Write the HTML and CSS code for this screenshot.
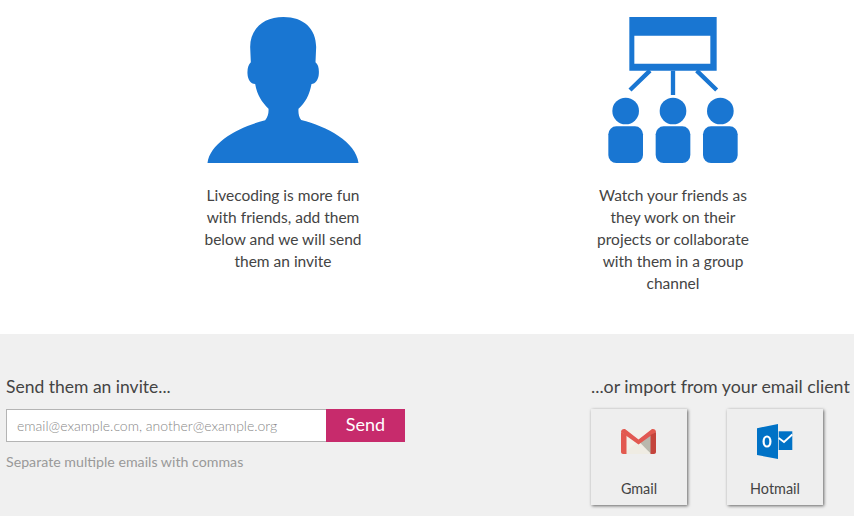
FILE: index.html
```html
<!DOCTYPE html>
<html lang="en">
<head>
<meta charset="utf-8">
<title>Invite friends</title>
<link rel="stylesheet" href="styles.css">
</head>
<body>
<section class="features">
  <div class="feature">
    <svg class="icon-person" viewBox="52 50 453 438" width="152" height="146" aria-hidden="true">
      <path class="blue" d="M280 50C340 50 378 85 378 140L376 186C384 192 387 205 386 220C385 238 376 250 364 251C358 285 345 308 325 325C324 338 326 350 333 359C410 378 498 425 505 488L52 488C60 425 150 378 225 360C233 350 236 338 235 325C215 305 201 285 195 251C181 250 173 238 172 220C171 205 175 192 182 186L180 140C180 85 220 50 280 50Z"/>
    </svg>
    <p>Livecoding is more fun with friends, add them below and we will send them an invite</p>
  </div>
  <div class="feature">
    <svg class="icon-group" viewBox="55 52 388 438" width="130" height="146" aria-hidden="true">
      <path class="blue" fill-rule="evenodd" d="M118 52H380V213H118ZM133 108V192H361V108Z"/>
      <path class="line" d="M180 213L120 271M249 213V286M320 213L380 271"/>
      <circle class="blue" cx="107" cy="334" r="40"/>
      <circle class="blue" cx="249" cy="334" r="40"/>
      <circle class="blue" cx="391" cy="334" r="40"/>
      <rect class="blue" x="55" y="380" width="104" height="110" rx="24"/>
      <rect class="blue" x="197" y="380" width="104" height="110" rx="24"/>
      <rect class="blue" x="339" y="380" width="104" height="110" rx="24"/>
    </svg>
    <p>Watch your friends as they work on their projects or collaborate with them in a group channel</p>
  </div>
</section>
<section class="invite">
  <div class="send">
    <h2>Send them an invite...</h2>
    <form class="send-row">
      <input class="email" type="text" placeholder="email@example.com, another@example.org">
      <button class="send-btn" type="button">Send</button>
    </form>
    <p class="hint">Separate multiple emails with commas</p>
  </div>
  <div class="import">
    <h2>...or import from your email client</h2>
    <div class="clients">
      <a class="client">
        <svg class="client-icon gmail" viewBox="0 0 35 25" width="35" height="25" aria-hidden="true">
          <path fill="#f3f0e8" d="M2 1H33V25H2Z"/>
          <path fill="#b9b8ad" d="M17.500 14L33 4V25H30Z"/>
          <path fill="#efece3" d="M2 25L17.500 12L30 25Z"/>
          <path fill="#e2594f" d="M0 3C0 1 1.500 0 3 0H4L17.500 10.500L31 0H32C33.500 0 35 1 35 3L17.500 15.500L0 3Z"/>
          <path fill="#e2594f" d="M0 3L5.500 6V25H2C1 25 0 24 0 23Z"/>
          <path fill="#c4443c" d="M35 3L29.500 6V25H33C34 25 35 24 35 23Z"/>
        </svg>
        <span>Gmail</span>
      </a>
      <a class="client">
        <svg class="client-icon outlook" viewBox="0 0 36 36" width="36" height="36" aria-hidden="true">
          <path fill="#0072c6" d="M0 4.300L21 0V35L0 31Z"/>
          <path fill="#0072c6" d="M21.700 7.300H35.300V26H21.700Z"/>
          <path class="check" d="M21.700 14L27 18L35.300 10.500"/>
          <ellipse class="zero" cx="10" cy="17.500" rx="3.400" ry="5"/>
        </svg>
        <span>Hotmail</span>
      </a>
    </div>
  </div>
</section>
</body>
</html>
```
FILE: styles.css
```css
* { box-sizing: border-box; }
html, body { margin: 0; padding: 0; }
body {
  width: 854px;
  height: 516px;
  overflow: hidden;
  background: #fff;
  color: #444;
  font-family: Lato, "Liberation Sans", sans-serif;
}
.features {
  height: 334px;
  padding: 17px 0 0 198px;
  display: flex;
  gap: 220px;
}
.feature {
  width: 170px;
  display: flex;
  flex-direction: column;
  align-items: center;
}
.feature svg { display: block; }
.feature p {
  margin: 21px 0 0;
  font-size: 15.5px;
  line-height: 22px;
  text-align: center;
}
.blue { fill: #1976d2; }
.line { fill: none; stroke: #1976d2; stroke-width: 13; }
.invite {
  height: 182px;
  background: #f0f0f0;
  padding: 40px 0 0 6px;
  display: flex;
  justify-content: space-between;
}
h2 {
  margin: 0;
  font-size: 17.8px;
  font-weight: 400;
  line-height: 24px;
  color: #444;
  white-space: nowrap;
}
.send { padding-top: 1px; }
.send h2 { font-size: 17.5px; }
.send-row {
  display: flex;
  margin: 10px 0 0;
}
.email {
  width: 320px;
  height: 33px;
  border: 1px solid #b4b4b4;
  border-right: 0;
  background: #fff;
  padding: 0 10px;
  font: 300 14px Lato, sans-serif;
  outline: 0;
}
.email::placeholder { color: #888; opacity: 1; }
.send-btn {
  width: 79px;
  height: 33px;
  border: 0;
  padding: 0 0 3px;
  background: #c72b6c;
  color: #fff;
  font: 400 18px Lato, sans-serif;
}
.hint {
  margin: 11px 0 0;
  font-size: 14.2px;
  line-height: 18px;
  color: #999;
}
.import { width: 263px; }
.clients {
  display: flex;
  gap: 40px;
  margin-top: 11px;
}
.client {
  width: 96px;
  height: 96px;
  background: #eee;
  box-shadow: 1px 1px 3px #666;
  display: flex;
  flex-direction: column;
  align-items: center;
  font-size: 14.4px;
  color: #444;
  padding-top: 20px;
  position: relative;
}
.client .gmail { margin-right: 1px; }
.client .outlook { margin-top: -5px; }
.client span {
  position: absolute;
  left: 0;
  right: 0;
  bottom: 7px;
  text-align: center;
  line-height: 18px;
}
.client-icon { display: block; }
.check { fill: none; stroke: #fff; stroke-width: 1.8; }
.zero { fill: none; stroke: #fff; stroke-width: 2.2; }
```
